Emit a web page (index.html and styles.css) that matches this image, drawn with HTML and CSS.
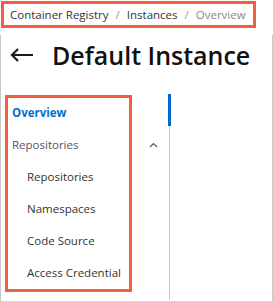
FILE: index.html
```html
<!DOCTYPE html>
<html lang="en">
<head>
  <meta charset="UTF-8">
  <meta name="viewport" content="width=device-width, initial-scale=1.0">
  <title>Default Instance</title>
  <link rel="stylesheet" href="styles.css">
</head>
<body>

  <!-- Breadcrumb (highlighted) -->
  <div class="crumb">
    <span class="crumb-link">Container Registry</span>
    <span class="crumb-sep">/</span>
    <span class="crumb-link">Instances</span>
    <span class="crumb-sep">/</span>
    <span class="crumb-current">Overview</span>
  </div>

  <div class="main">
    <h1 class="title">
      <svg class="back" width="24" height="14" viewBox="0 0 24 14">
        <path d="M23 7H2M8 1L2 7l6 6" fill="none" stroke="#1a1a1a" stroke-width="2.2"/>
      </svg>
      Default Instance
    </h1>

    <div class="layout">
      <div class="nav">
        <div class="nav-item active">Overview</div>
        <div class="nav-item group">
          Repositories
          <svg class="chevron" width="9" height="6" viewBox="0 0 9 6">
            <path d="M1 5l3.5-3.5L8 5" fill="none" stroke="#555" stroke-width="1.2"/>
          </svg>
        </div>
        <div class="nav-item sub">Repositories</div>
        <div class="nav-item sub">Namespaces</div>
        <div class="nav-item sub">Code Source</div>
        <div class="nav-item sub">Access Credential</div>

        <!-- highlight box over the menu -->
        <div class="mark"></div>
      </div>

      <div class="pane">
        <div class="indicator"></div>
      </div>
    </div>
  </div>

</body>
</html>
```

FILE: styles.css
```css
body {
  margin: 0;
  width: 273px;
  height: 301px;
  background-color: #ffffff;
  font-family: "Open Sans", "Noto Sans", sans-serif;
  overflow: hidden;
}

/* Breadcrumb */
.crumb {
  box-sizing: border-box;
  margin: 1px 0 0 1px;
  width: 255px;
  height: 27px;
  border: 3px solid #f0603e;
  padding-left: 6px;
  display: flex;
  align-items: center;
  gap: 7px;
  font-size: 11.5px;
  white-space: nowrap;
}

.crumb-link {
  color: #333333;
}

.crumb-sep {
  color: #999999;
}

.crumb-current {
  color: #888888;
}

/* Main frame */
.main {
  box-sizing: border-box;
  height: 273px;
  border-left: 1px solid #c8c8c8;
  border-right: 1px solid #c8c8c8;
  border-bottom: 1px solid #c8c8c8;
}

.title {
  margin: 7px 0 0 0;
  height: 40px;
  line-height: 40px;
  padding-left: 9px;
  display: flex;
  align-items: center;
  gap: 18px;
  font-size: 25px;
  font-weight: 600;
  color: #111111;
  white-space: nowrap;
}

.back {
  flex: none;
}

.layout {
  display: flex;
  margin-top: 19px;
  height: 206px;
}

.nav {
  position: relative;
  width: 168px;
  padding-top: 3px;
}

.nav-item {
  height: 32px;
  line-height: 32px;
  padding-left: 11px;
  font-size: 11.5px;
  color: #333333;
  white-space: nowrap;
}

.nav-item.active {
  color: #0070cc;
  font-weight: 700;
}

.nav-item.group {
  color: #555555;
  display: flex;
  align-items: center;
  justify-content: space-between;
  padding-right: 11px;
}

.nav-item.sub {
  padding-left: 26px;
}

/* annotation box */
.mark {
  position: absolute;
  left: 4px;
  top: 1px;
  width: 127px;
  height: 197px;
  box-sizing: border-box;
  border: 3px solid #f0603e;
}

.pane {
  flex: 1;
  border-left: 1px solid #c8c8c8;
}

.indicator {
  width: 3px;
  height: 32px;
  margin-left: -2px;
  background-color: #006ad4;
}
```
